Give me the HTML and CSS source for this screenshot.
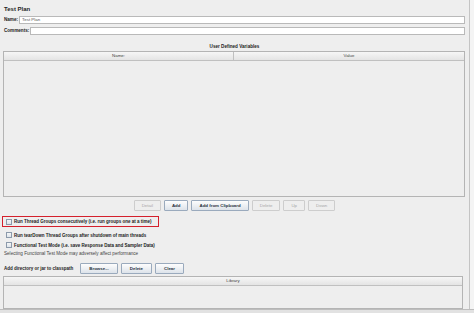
FILE: index.html
```html
<!DOCTYPE html>
<html lang="en">
<head>
    <meta charset="UTF-8">
    <meta name="viewport" content="width=device-width, initial-scale=1.0">
    <title>Test Plan</title>
    <link rel="stylesheet" href="styles.css">
</head>
<body>

    <div class="window">
        <div class="panel">
            <h1 class="title">Test Plan</h1>

            <div class="field">
                <label for="name">Name:</label>
                <input type="text" id="name" value="Test Plan">
            </div>
            <div class="field">
                <label for="comments">Comments:</label>
                <input type="text" id="comments">
            </div>

            <div class="section-title">User Defined Variables</div>
            <div class="table vars">
                <div class="table-head two-cols">
                    <div class="th">Name:</div>
                    <div class="th">Value</div>
                </div>
                <div class="table-body"></div>
            </div>

            <div class="button-row">
                <button disabled>Detail</button>
                <button>Add</button>
                <button>Add from Clipboard</button>
                <button disabled>Delete</button>
                <button disabled>Up</button>
                <button disabled>Down</button>
            </div>

            <div class="options">
                <label class="check highlighted"><span class="box"></span>Run Thread Groups consecutively (i.e. run groups one at a time)</label>
                <label class="check"><span class="box"></span>Run tearDown Thread Groups after shutdown of main threads</label>
                <label class="check"><span class="box"></span>Functional Test Mode (i.e. save Response Data and Sampler Data)</label>
                <p class="note">Selecting Functional Test Mode may adversely affect performance</p>
            </div>

            <div class="classpath">
                <span class="classpath-label">Add directory or jar to classpath</span>
                <button>Browse...</button>
                <button>Delete</button>
                <button>Clear</button>
            </div>

            <div class="table library">
                <div class="table-head">
                    <div class="th">Library</div>
                </div>
                <div class="table-body"></div>
            </div>
        </div>
        <div class="strip"></div>
    </div>
    <div class="bottom"></div>

</body>
</html>
```

FILE: styles.css
```css
* {
    box-sizing: border-box;
}
body {
    font-family: 'Liberation Sans', Arial, sans-serif;
    background-color: #eeeeee;
    color: #222;
    margin: 0;
    padding: 0;
    width: 474px;
    height: 313px;
    overflow: hidden;
}
.window {
    display: flex;
    height: 309px;
}
.panel {
    width: 469px;
    padding: 0 3px 0 3px;
    display: flex;
    flex-direction: column;
}
.strip {
    flex: 1;
    border-left: 1px solid #c4c4c4;
    background-color: #f4f4f4;
}
.bottom {
    height: 4px;
    border-top: 1px solid #bdbdbd;
    background-color: #e2e2e2;
}
.title {
    font-size: 6px;
    font-weight: bold;
    margin: 0;
    padding: 6px 0 0 1px;
    height: 15px;
    color: #1e1e1e;
}
.field {
    display: flex;
    align-items: center;
    height: 9px;
    margin-bottom: 2px;
}
.field label {
    font-size: 4.6px;
    font-weight: bold;
    padding-left: 1px;
    margin-right: 1px;
}
.field input {
    flex: 1;
    height: 8px;
    border: 1px solid #b9b9b9;
    background-color: #fff;
    font-family: inherit;
    font-size: 4.4px;
    padding: 0 2px;
    margin: 0 1px 0 0;
    color: #555;
    outline: none;
}
.section-title {
    text-align: center;
    font-size: 4.6px;
    font-weight: bold;
    margin-top: 7px;
    height: 6px;
}
.table {
    border: 1px solid #b4b4b4;
    display: flex;
    flex-direction: column;
    margin-right: 1px;
}
.vars {
    flex: 1;
    margin-top: 1px;
}
.table-head {
    display: grid;
    height: 9px;
    background: linear-gradient(#f6f6f6, #e4e4e4);
    border-bottom: 1px solid #c0c0c0;
}
.two-cols {
    grid-template-columns: 1fr 1fr;
}
.th {
    font-size: 4.4px;
    text-align: center;
    line-height: 8px;
    color: #444;
}
.two-cols .th:first-child {
    border-right: 1px solid #c0c0c0;
}
.table-body {
    flex: 1;
}
.button-row {
    display: flex;
    justify-content: center;
    gap: 3px;
    margin-top: 3px;
    height: 11px;
}
button {
    font-family: inherit;
    font-size: 4.4px;
    font-weight: bold;
    height: 11px;
    padding: 0 7px;
    border: 1px solid #9aaabd;
    border-radius: 1px;
    background: linear-gradient(#fdfdfd, #dde3ea);
    color: #2a3240;
    cursor: pointer;
}
button:disabled {
    border-color: #cdcdcd;
    background: #eeeeee;
    color: #a8a8a8;
    font-weight: normal;
    cursor: default;
}
.options {
    margin-top: 5px;
    display: flex;
    flex-direction: column;
}
.check {
    display: flex;
    align-items: center;
    font-size: 4.5px;
    font-weight: bold;
    height: 10px;
    padding-left: 3px;
}
.check.highlighted {
    border: 1px solid #d4202c;
    width: 157px;
    height: 11px;
    margin-left: -1px;
    margin-bottom: 3px;
    padding-left: 3px;
}
.box {
    width: 6px;
    height: 6px;
    border: 1px solid #8c9aab;
    background: linear-gradient(#f4f6f8, #dfe4ea);
    margin-right: 2px;
    flex-shrink: 0;
}
.note {
    font-size: 4.6px;
    margin: 0;
    height: 9px;
    line-height: 8px;
    padding-left: 1px;
    color: #444;
}
.classpath {
    display: flex;
    align-items: center;
    gap: 3px;
    margin-top: 4px;
    height: 11px;
}
.classpath-label {
    font-size: 4.5px;
    font-weight: bold;
    padding-left: 1px;
    margin-right: 4px;
}
.classpath button {
    padding: 0 8px;
}
.library {
    margin-top: 2px;
    height: 33px;
    margin-right: 3px;
}
.library .table-head {
    grid-template-columns: 1fr;
}
```
